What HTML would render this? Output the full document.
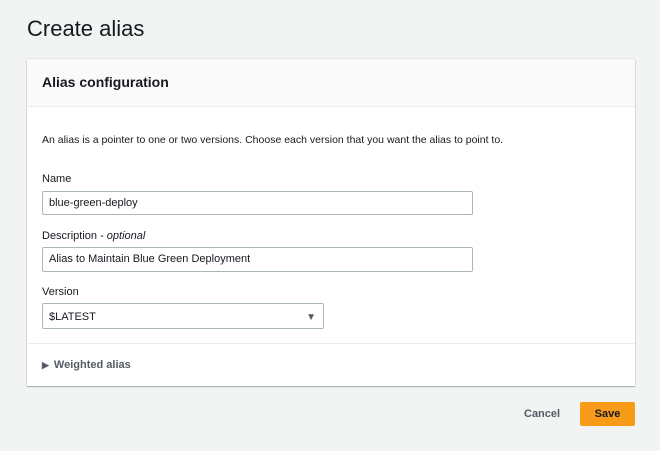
<!DOCTYPE html><html><head><style>
body{margin:0;width:660px;height:451px;background:#f2f3f3;font-family:"Liberation Sans",sans-serif;color:#16191f;position:relative;overflow:hidden}
.a{position:absolute}
h1{position:absolute;left:27px;top:16px;margin:0;font-size:22px;font-weight:normal;color:#16191f}
.card{left:27px;top:59px;width:608px;height:327px;background:#fff;box-shadow:0 1px 1px rgba(0,31,51,.3),0 0 1px rgba(0,31,51,.3)}
.hd{left:0;top:0;width:608px;height:47px;background:#fafafa;border-bottom:1px solid #eaeded}
.lbl{font-size:11px;color:#16191f}
.in{border:1px solid #aab7b8;border-radius:2px;background:#fff;font-size:11px;box-sizing:border-box;padding-left:6px}
</style></head><body>
<h1>Create alias</h1>
<div class="a card">
<div class="a hd"><div class="a" style="left:15px;top:15px;font-size:14px;font-weight:bold">Alias configuration</div></div>
<div class="a lbl" style="left:15px;top:75px;font-size:10.5px">An alias is a pointer to one or two versions. Choose each version that you want the alias to point to.</div>
<div class="a lbl" style="left:15px;top:114px">Name</div>
<div class="a in" style="left:15px;top:132px;width:431px;height:24px;line-height:22px">blue-green-deploy</div>
<div class="a lbl" style="left:15px;top:171px">Description - <i>optional</i></div>
<div class="a in" style="left:15px;top:188px;width:431px;height:25px;line-height:23px">Alias to Maintain Blue Green Deployment</div>
<div class="a lbl" style="left:15px;top:227px">Version</div>
<div class="a in" style="left:15px;top:244px;width:282px;height:26px;line-height:26px">$LATEST<span class="a" style="right:7px;top:1px;font-size:10px;color:#545b64">▼</span></div>
<div class="a" style="left:0;top:284px;width:608px;height:1px;background:#eaeded"></div>
<div class="a" style="left:15px;top:300px;font-size:11px;font-weight:bold;color:#545b64"><span style="font-size:9px;margin-right:5px">▶</span>Weighted alias</div>
</div>
<div class="a" style="left:524px;top:408px;font-size:11px;font-weight:bold;color:#545b64">Cancel</div>
<div class="a" style="left:580px;top:402px;width:55px;height:24px;border-radius:2px;background:#f79b19;font-size:11px;font-weight:bold;color:#16191f;text-align:center;line-height:24px">Save</div>
</body></html>
